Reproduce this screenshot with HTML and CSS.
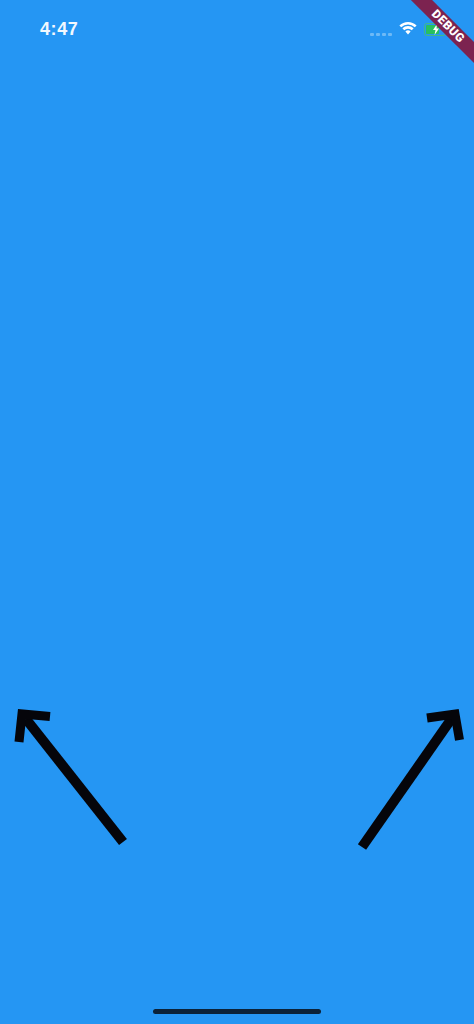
FILE: index.html
```html
<!DOCTYPE html>
<html lang="en">
<head>
  <meta charset="UTF-8" />
  <meta name="viewport" content="width=device-width, initial-scale=1.0"/>
  <title>Arrows</title>
  <link rel="stylesheet" href="styles.css">
</head>
<body>

  <div class="screen">
    <div class="status-bar">
      <span class="time">4:47</span>
      <div class="status-icons">
        <div class="signal">
          <span></span><span></span><span></span><span></span>
        </div>
        <svg class="wifi" width="18" height="14" viewBox="0 0 18 14">
          <path d="M1.300 5.400 A11 11 0 0 1 16.700 5.400" fill="none" stroke="#fff" stroke-width="2.600"/>
          <path d="M4.300 8.300 A6.800 6.800 0 0 1 13.700 8.300" fill="none" stroke="#fff" stroke-width="2.600"/>
          <path d="M6.400 10.600 A3.600 3.600 0 0 1 11.600 10.600 L9 13.600 Z" fill="#fff"/>
        </svg>
        <div class="battery">
          <div class="battery-level"></div>
          <svg class="bolt" width="8" height="11" viewBox="0 0 8 11">
            <path d="M5 0 L1 6 L3.500 6 L2.500 11 L7 4.500 L4.500 4.500 Z" fill="#fff"/>
          </svg>
        </div>
      </div>
    </div>

    <div class="arrows">
      <svg width="140" height="160" viewBox="0 0 140 160">
        <path d="M123 152 L26 29" fill="none" stroke="#05050a" stroke-width="10"/>
        <path d="M50 26.500 L22 24 L19 52" fill="none" stroke="#05050a" stroke-width="9"/>
      </svg>
      <svg width="130" height="160" viewBox="0 0 130 160">
        <path d="M18 157 L108 28" fill="none" stroke="#05050a" stroke-width="10"/>
        <path d="M83 28 L111 24 L115.500 50" fill="none" stroke="#05050a" stroke-width="9"/>
      </svg>
    </div>

    <div class="home-bar"></div>

    <div class="debug-banner">DEBUG</div>
  </div>

</body>
</html>
```

FILE: styles.css
```css
body {
  margin: 0;
  font-family: 'Roboto', 'Liberation Sans', sans-serif;
  background: #2596f3;
}

.screen {
  position: relative;
  height: 1024px;
  overflow: hidden;
  display: flex;
  flex-direction: column;
  background: #2596f3;
}

.status-bar {
  display: flex;
  justify-content: space-between;
  align-items: center;
  padding: 18px 28px 0 40px;
  height: 22px;
}

.time {
  color: #f2f8fe;
  font-size: 18px;
  font-weight: 700;
  letter-spacing: 0.6px;
  font-family: 'Liberation Sans', sans-serif;
}

.status-icons {
  display: flex;
  align-items: center;
  gap: 7px;
}

.signal {
  display: flex;
  gap: 2px;
  margin: 11px 0 0 0;
}

.signal span {
  width: 4px;
  height: 3px;
  border-radius: 1px;
  background: #6db9f6;
}

.wifi {
  margin-top: -3px;
}

.battery {
  position: relative;
  width: 22px;
  height: 13px;
  box-sizing: border-box;
  border: 1px solid #3fb98a;
  border-radius: 3px;
  padding: 1px;
}

.battery-level {
  width: 13px;
  height: 100%;
  background: #27c05f;
  border-radius: 1px;
}

.bolt {
  position: absolute;
  top: 0;
  left: 7px;
}

.arrows {
  display: flex;
  justify-content: space-between;
  margin-top: auto;
}

.home-bar {
  width: 168px;
  height: 5px;
  margin: 159px auto 10px;
  border-radius: 3px;
  background: #0b2238;
}

.debug-banner {
  position: absolute;
  top: 19px;
  right: -34px;
  width: 120px;
  height: 15px;
  line-height: 15px;
  transform: rotate(45deg);
  background: #7c2350;
  color: #fff;
  font-size: 12px;
  font-weight: 900;
  letter-spacing: 0.5px;
  text-align: center;
}
```
